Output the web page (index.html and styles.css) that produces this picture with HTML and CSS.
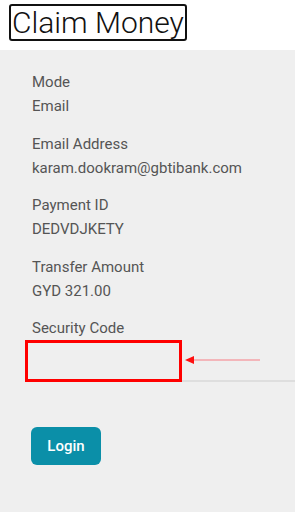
FILE: index.html
```html
<!DOCTYPE html>
<html>
<head>
<meta charset="utf-8">
<link rel="stylesheet" href="styles.css">
</head>
<body>
<header class="top">
  <h1 class="title">Claim Money</h1>
</header>
<main class="panel">
  <div class="field">
    <div class="label">Mode</div>
    <div class="value">Email</div>
  </div>
  <div class="field">
    <div class="label">Email Address</div>
    <div class="value">karam.dookram@gbtibank.com</div>
  </div>
  <div class="field">
    <div class="label">Payment ID</div>
    <div class="value">DEDVDJKETY</div>
  </div>
  <div class="field">
    <div class="label">Transfer Amount</div>
    <div class="value">GYD 321.00</div>
  </div>
  <div class="field code-field">
    <div class="label">Security Code</div>
    <div class="input-row">
      <div class="code-box"></div>
      <svg class="arrow" width="76" height="10" viewBox="0 0 76 10">
        <line x1="6" y1="5" x2="75" y2="5" stroke="#f5a3a8" stroke-width="1.5"/>
        <polygon points="0,5 9,1 9,9" fill="#ff1010"/>
      </svg>
    </div>
  </div>
  <div class="actions">
    <button class="login">Login</button>
  </div>
</main>
</body>
</html>
```

FILE: styles.css
```css
html, body {
  margin: 0;
  padding: 0;
  height: 100%;
}
body {
  font-family: Roboto, "Liberation Sans", sans-serif;
  background: #efefef;
  display: flex;
  flex-direction: column;
}
.top {
  background: #ffffff;
  height: 50px;
  padding: 4px 0 0 9px;
  box-sizing: border-box;
}
.title {
  display: inline-block;
  margin: 0;
  font-weight: 300;
  font-size: 30px;
  line-height: 33px;
  color: #111;
  border: 2px solid #111;
  border-radius: 3px;
  padding: 0 1px 0 1px;
}
.panel {
  flex: 1;
  background: #efefef;
  padding: 23px 0 0 32px;
}
.field {
  display: flex;
  flex-direction: column;
  gap: 6px;
  margin-bottom: 19.5px;
  color: #555;
  font-size: 15px;
  line-height: 18px;
}
.code-field {
  margin-bottom: 0;
  gap: 3px;
}
.input-row {
  display: flex;
  align-items: center;
  margin-left: -7px;
  border-bottom: 2px solid #dedede;
  height: 40px;
}
.code-box {
  flex: none;
  width: 151px;
  height: 36px;
  border: 3px solid #ff0000;
  margin-bottom: -2px;
}
.arrow {
  display: block;
  margin-left: 3px;
}
.actions {
  padding-top: 45px;
}
.login {
  width: 70px;
  height: 38px;
  border: none;
  border-radius: 6px;
  background: #0b8fa8;
  color: #fff;
  font-family: Roboto, "Liberation Sans", sans-serif;
  font-weight: 500;
  font-size: 15px;
  padding: 0;
  margin-left: -1px;
}
```
